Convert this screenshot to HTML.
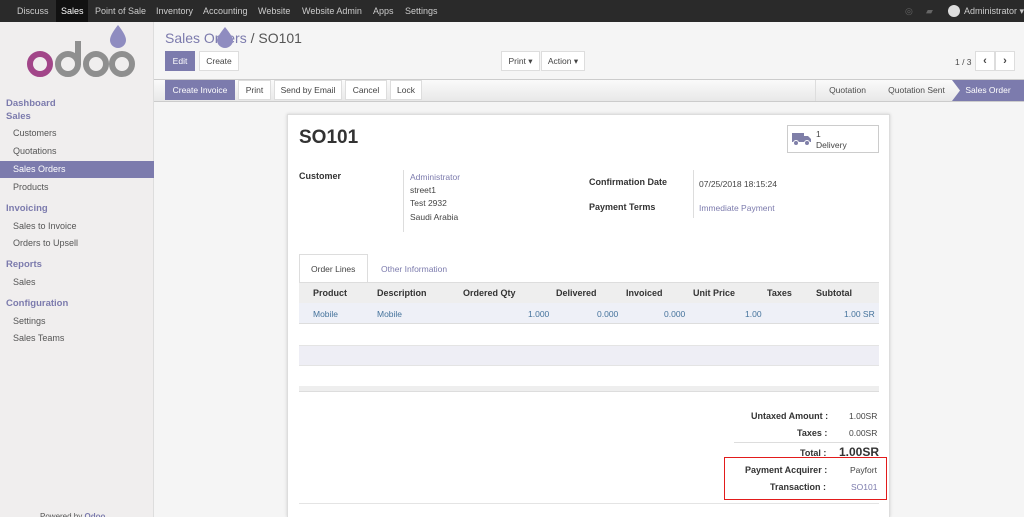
<!DOCTYPE html>
<html><head><style>
*{box-sizing:border-box;margin:0;padding:0}
html,body{width:1024px;height:517px;overflow:hidden}
body{font-family:"Liberation Sans",sans-serif;font-size:9px;color:#4c4c4c;background:#f5f5f5;position:relative}
.a{position:absolute}
#top{left:0;top:0;width:1024px;height:22px;background:#2a2a2a}
#top span{position:absolute;top:6px;color:#ccc;font-size:9px;white-space:nowrap}
#side{left:0;top:22px;width:154px;height:495px;background:#f0eeee;border-right:1px solid #ddd}
.h{position:absolute;left:6px;color:#7c7bad;font-weight:bold;font-size:9.5px}
.i{position:absolute;left:13px;color:#555;font-size:9px}
.btn{position:absolute;height:20px;background:#fff;border:1px solid #ddd;font-size:8.5px;color:#444;text-align:center;line-height:18px}
.pri{background:#7c7bad;color:#fff;border-color:#7c7bad}
.lbl{position:absolute;font-weight:bold;color:#333;font-size:9px}
.v{position:absolute;font-size:8.5px;color:#444}
.lk{color:#7c7bad}
.th{position:absolute;top:288px;font-weight:bold;color:#333;font-size:9px}
.td{position:absolute;top:309px;font-size:8.5px;color:#45739c}
</style></head><body>
<div id="top" class="a">
<span style="left:17px">Discuss</span>
<span style="left:56px;top:0;height:22px;width:32px;background:#111;color:#fff;padding:6px 0 0 5px">Sales</span>
<span style="left:95px">Point of Sale</span>
<span style="left:156px">Inventory</span>
<span style="left:203px">Accounting</span>
<span style="left:258px">Website</span>
<span style="left:302px">Website Admin</span>
<span style="left:373px">Apps</span>
<span style="left:405px">Settings</span>
<span style="left:905px;color:#666">◎</span>
<span style="left:926px;color:#666">▰</span>
<span style="left:948px;top:5px;width:12px;height:12px;border-radius:6px;background:#ddd"></span>
<span style="left:964px">Administrator ▾</span>
</div>
<div id="side" class="a">
<svg class="a" style="left:0;top:0" width="154" height="60" viewBox="0 0 154 60">
<circle cx="40" cy="42" r="10" fill="none" stroke="#a24689" stroke-width="6"/>
<circle cx="68" cy="42" r="10" fill="none" stroke="#8f8f8f" stroke-width="6"/>
<rect x="75" y="19" width="6" height="24" fill="#8f8f8f"/>
<circle cx="96" cy="42" r="10" fill="none" stroke="#8f8f8f" stroke-width="6"/>
<circle cx="122" cy="42" r="10" fill="none" stroke="#8f8f8f" stroke-width="6"/>
<path d="M118 3 Q126 13 126 18 A8 8 0 0 1 110 18 Q110 13 118 3Z" fill="#8f8cc0"/>
</svg>
<div class="h" style="top:76px">Dashboard</div>
<div class="h" style="top:89px">Sales</div>
<div class="i" style="top:106px">Customers</div>
<div class="i" style="top:124px">Quotations</div>
<div class="a" style="left:0;top:139px;width:154px;height:17px;background:#7c7bad"></div>
<div class="i" style="top:142px;color:#fff">Sales Orders</div>
<div class="i" style="top:160px">Products</div>
<div class="h" style="top:181px">Invoicing</div>
<div class="i" style="top:199px">Sales to Invoice</div>
<div class="i" style="top:216px">Orders to Upsell</div>
<div class="h" style="top:237px">Reports</div>
<div class="i" style="top:255px">Sales</div>
<div class="h" style="top:276px">Configuration</div>
<div class="i" style="top:294px">Settings</div>
<div class="i" style="top:311px">Sales Teams</div>
<div class="i" style="top:490px;left:40px;font-size:8px">Powered by <b class="lk">Odoo</b></div>
</div>
<div class="a" style="left:165px;top:30px;font-size:14px;color:#7c7bad">Sales Orders <span style="color:#555">/ SO101</span></div>
<svg class="a" style="left:216px;top:26px" width="18" height="22"><path d="M9 1 Q17 11 17 14 A8 8 0 0 1 1 14 Q1 11 9 1Z" fill="#8f8cc0"/></svg>
<div class="btn pri" style="left:165px;top:51px;width:30px">Edit</div>
<div class="btn" style="left:199px;top:51px;width:40px">Create</div>
<div class="btn" style="left:501px;top:51px;width:39px">Print ▾</div>
<div class="btn" style="left:541px;top:51px;width:44px">Action ▾</div>
<div class="a" style="left:955px;top:57px;font-size:8.5px">1 / 3</div>
<div class="btn" style="left:975px;top:51px;width:20px;font-weight:bold;font-size:11px">‹</div>
<div class="btn" style="left:995px;top:51px;width:20px;font-weight:bold;font-size:11px">›</div>
<div class="a" style="left:154px;top:79px;width:870px;height:23px;background:linear-gradient(#fafafa,#e8e8e8);border-top:1px solid #ccc;border-bottom:1px solid #ccc"></div>
<div class="btn pri" style="left:165px;top:80px;width:70px">Create Invoice</div>
<div class="btn" style="left:238px;top:80px;width:33px">Print</div>
<div class="btn" style="left:274px;top:80px;width:68px">Send by Email</div>
<div class="btn" style="left:345px;top:80px;width:42px">Cancel</div>
<div class="btn" style="left:390px;top:80px;width:32px">Lock</div>
<div class="a" style="left:815px;top:80px;width:64px;height:21px;border-left:1px solid #ddd;text-align:center;line-height:21px;font-size:8.5px">Quotation</div>
<div class="a" style="left:879px;top:80px;width:75px;height:21px;text-align:center;line-height:21px;font-size:8.5px">Quotation Sent</div>
<div class="a" style="left:952px;top:80px;width:72px;height:21px;background:#7c7bad;color:#fff;text-align:center;line-height:21px;font-size:8.5px;clip-path:polygon(0 0,100% 0,100% 100%,0 100%,8px 50%)">Sales Order</div>
<div class="a" style="left:287px;top:114px;width:603px;height:403px;background:#fff;border:1px solid #ddd;border-bottom:none;box-shadow:0 0 3px #ccc"></div>
<div class="a" style="left:299px;top:127px;font-size:19px;font-weight:bold;color:#333">SO101</div>
<div class="a" style="left:787px;top:125px;width:92px;height:28px;border:1px solid #ccc"></div>
<svg class="a" style="left:792px;top:131px" width="20" height="16"><rect x="0" y="2" width="12" height="9" fill="#7f7fa8"/><path d="M12 5h4l3 3v3h-7z" fill="#7f7fa8"/><circle cx="4" cy="12" r="2.5" fill="#7f7fa8" stroke="#fff"/><circle cx="15" cy="12" r="2.5" fill="#7f7fa8" stroke="#fff"/></svg>
<div class="v" style="left:816px;top:129px;line-height:11px">1<br>Delivery</div>
<div class="lbl" style="left:299px;top:171px">Customer</div>
<div class="a" style="left:403px;top:170px;width:1px;height:62px;background:#ddd"></div>
<div class="v lk" style="left:410px;top:172px">Administrator</div>
<div class="v" style="left:410px;top:185px">street1</div>
<div class="v" style="left:410px;top:198px">Test 2932</div>
<div class="v" style="left:410px;top:212px">Saudi Arabia</div>
<div class="lbl" style="left:589px;top:177px">Confirmation Date</div>
<div class="lbl" style="left:589px;top:202px">Payment Terms</div>
<div class="a" style="left:693px;top:170px;width:1px;height:48px;background:#ddd"></div>
<div class="v" style="left:699px;top:179px">07/25/2018 18:15:24</div>
<div class="v lk" style="left:699px;top:203px">Immediate Payment</div>
<div class="a" style="left:299px;top:254px;width:69px;height:29px;border:1px solid #ddd;border-bottom:none;background:#fff"></div>
<div class="v" style="left:311px;top:264px">Order Lines</div>
<div class="v lk" style="left:381px;top:264px">Other Information</div>
<div class="a" style="left:299px;top:282px;width:580px;height:21px;background:#eee;border-top:1px solid #ddd"></div>
<div class="th" style="left:313px">Product</div><div class="th" style="left:377px">Description</div><div class="th" style="left:463px">Ordered Qty</div><div class="th" style="left:556px">Delivered</div><div class="th" style="left:626px">Invoiced</div><div class="th" style="left:693px">Unit Price</div><div class="th" style="left:767px">Taxes</div><div class="th" style="left:816px">Subtotal</div>
<div class="a" style="left:299px;top:303px;width:580px;height:21px;background:#eef0f7;border-bottom:1px solid #ddd"></div>
<div class="td" style="left:313px">Mobile</div><div class="td" style="left:377px">Mobile</div><div class="td" style="left:528px">1.000</div><div class="td" style="left:597px">0.000</div><div class="td" style="left:664px">0.000</div><div class="td" style="left:745px">1.00</div><div class="td" style="left:844px">1.00 SR</div>
<div class="a" style="left:299px;top:345px;width:580px;height:21px;background:#eeeef5;border-top:1px solid #e4e4e4;border-bottom:1px solid #e4e4e4"></div>
<div class="a" style="left:299px;top:386px;width:580px;height:6px;background:#eee;border-bottom:1px solid #ddd"></div>
<div class="lbl" style="left:751px;top:411px">Untaxed Amount :</div><div class="v" style="left:849px;top:411px">1.00SR</div>
<div class="lbl" style="left:797px;top:428px">Taxes :</div><div class="v" style="left:849px;top:428px">0.00SR</div>
<div class="a" style="left:734px;top:442px;width:145px;height:1px;background:#ddd"></div>
<div class="lbl" style="left:800px;top:448px">Total :</div><div class="a" style="left:839px;top:445px;font-weight:bold;font-size:12px;color:#333">1.00SR</div>
<div class="a" style="left:724px;top:457px;width:163px;height:43px;border:1.5px solid #e21b1b"></div>
<div class="lbl" style="left:745px;top:465px">Payment Acquirer :</div><div class="v" style="left:850px;top:465px">Payfort</div>
<div class="lbl" style="left:770px;top:482px">Transaction :</div><div class="v lk" style="left:851px;top:482px">SO101</div>
<div class="a" style="left:299px;top:503px;width:580px;height:1px;background:#e4e4e4"></div>
</body></html>
